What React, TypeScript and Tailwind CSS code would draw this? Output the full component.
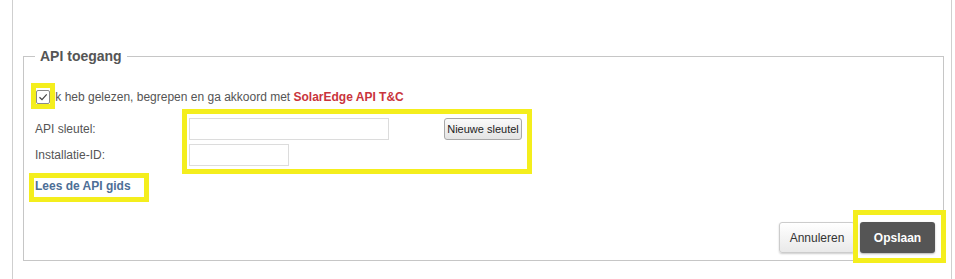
export default function App() {
  return (
    <div className="w-[955px] h-[279px] bg-white font-['Liberation_Sans',Arial,sans-serif] text-[12px] leading-[16px] text-[#555]">
      <div className="ml-[12px] w-[940px] h-full border-x border-[#cfcfcf] pt-[48px] pl-[10px] pr-[7px]">
        <fieldset className="border border-[#c6c6c6] pl-[11px] pr-[8px] pb-[7px]">
          <legend className="px-[5px] text-[14px] font-bold leading-[16px] text-[#555]">API toegang</legend>

          {/* Terms checkbox */}
          <div className="mt-[25px] flex items-center h-[16px]">
            <div className="relative ml-[1px]">
              <span className="flex items-center justify-center w-[14px] h-[14px] border border-[#8a8a8a] rounded-[2px] bg-white">
                <svg width="10" height="10" viewBox="0 0 10 10" fill="none">
                  <path d="M1.5 5.2 L4 7.6 L8.7 2.4" stroke="#444" strokeWidth="1.2" />
                </svg>
              </span>
              <div className="absolute -left-[5px] -right-[5px] -top-[7px] -bottom-[5px] border-[5px] border-[#f4ee1d]" />
            </div>
            <span className="ml-[2px]">
              Ik heb gelezen, begrepen en ga akkoord met{' '}
              <span className="font-bold text-[#c9343c]">SolarEdge API T&amp;C</span>
            </span>
          </div>

          {/* Key / id fields */}
          <div className="mt-[13px] flex">
            <div className="w-[154px] flex flex-col gap-[4px]">
              <div className="h-[22px] flex items-center">API sleutel:</div>
              <div className="h-[22px] flex items-center">Installatie-ID:</div>
            </div>
            <div className="relative flex flex-col gap-[4px]">
              <div className="flex items-center">
                <input className="w-[200px] h-[22px] border border-[#dcdcdc] bg-white outline-none" />
                <button className="ml-[55px] w-[78px] h-[22px] px-0 rounded-[3px] border border-[#a8a8a8] bg-gradient-to-b from-[#fafafa] to-[#e4e4e4] text-[11px] text-[#222]">
                  Nieuwe sleutel
                </button>
              </div>
              <input className="w-[100px] h-[22px] border border-[#dcdcdc] bg-white outline-none" />
              <div className="absolute -left-[7px] -right-[10px] -top-[9px] -bottom-[8px] border-[5px] border-[#f4ee1d]" />
            </div>
          </div>

          {/* Guide link */}
          <div className="mt-[12px] flex">
            <span className="relative font-bold text-[#4d6e96]">
              Lees de API gids
              <span className="absolute -left-[6px] -right-[18px] -top-[5px] -bottom-[8px] border-[5px] border-[#f4ee1d]" />
            </span>
          </div>

          {/* Actions */}
          <div className="mt-[28px] flex justify-end gap-[5px]">
            <button className="w-[76px] h-[31px] rounded-[3px] border border-[#cccccc] bg-gradient-to-b from-white to-[#e9e9e9] shadow-[0_1px_2px_rgba(0,0,0,0.2)] text-[12px] text-[#333]">
              Annuleren
            </button>
            <div className="relative">
              <button className="w-[75px] h-[31px] rounded-[3px] bg-[#555555] shadow-[0_1px_2px_rgba(0,0,0,0.3)] text-[12px] font-bold text-white">
                Opslaan
              </button>
              <div className="absolute -left-[7px] -right-[11px] -top-[12px] -bottom-[10px] border-[5px] border-[#f4ee1d]" />
            </div>
          </div>
        </fieldset>
      </div>
    </div>
  );
}
